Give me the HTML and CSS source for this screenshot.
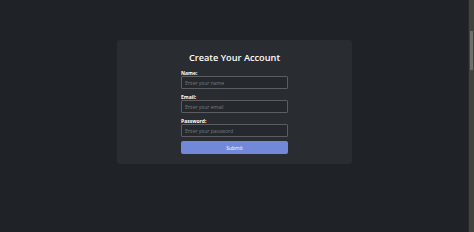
FILE: index.html
```html
<!DOCTYPE html>
<html lang="en">
<head>
  <meta charset="UTF-8" />
  <meta name="viewport" content="width=device-width, initial-scale=1.0" />
  <title>Create Your Account</title>
  <link rel="stylesheet" href="styles.css">
</head>
<body>
  <!-- signup card -->
  <div class="signup-card">
    <h1>Create Your Account</h1>
    <form class="signup-form" onsubmit="return false">
      <label for="name">Name:</label>
      <input type="text" id="name" placeholder="Enter your name" />

      <label for="email">Email:</label>
      <input type="email" id="email" placeholder="Enter your email" />

      <label for="password">Password:</label>
      <input type="password" id="password" placeholder="Enter your password" />

      <button type="submit">Submit</button>
    </form>
  </div>

  <!-- fake scrollbar -->
  <div class="scrollbar">
    <div class="scroll-arrow"></div>
    <div class="scroll-thumb"></div>
  </div>
</body>
</html>
```

FILE: styles.css
```css
body {
  margin: 0;
  padding: 40px 5px 0 0;
  font-family: "Open Sans", "Noto Sans", sans-serif;
  background-color: #1f2226;
  color: #fff;
  height: 232px;
  box-sizing: border-box;
  overflow: hidden;
}

.signup-card {
  width: 235px;
  height: 124px;
  margin: 0 auto;
  background: #292c31;
  border-radius: 3px;
  box-sizing: border-box;
  padding-top: 11px;
  text-align: center;
}

.signup-card h1 {
  margin: 0 0 6px;
  font-size: 9.2px;
  font-weight: 600;
  line-height: 13px;
}

.signup-form {
  width: 107px;
  margin: 0 auto;
  display: flex;
  flex-direction: column;
  text-align: left;
}

.signup-form label {
  font-size: 5px;
  font-weight: bold;
  line-height: 6px;
}

.signup-form input {
  height: 13px;
  box-sizing: border-box;
  border: 1px solid #5a5d62;
  border-radius: 1px;
  background: #25282c;
  color: #ddd;
  font-family: inherit;
  font-size: 5px;
  padding: 0 3px;
  margin-bottom: 5px;
  outline: none;
}

.signup-form input::placeholder {
  color: #7a7d82;
}

.signup-form button {
  height: 13px;
  margin-top: -1px;
  border: none;
  border-radius: 2px;
  background-color: #7289da;
  color: #fff;
  font-family: inherit;
  font-size: 5px;
  cursor: pointer;
}

.scrollbar {
  position: fixed;
  top: 0;
  right: 0;
  width: 5px;
  height: 100%;
  background: #424242;
  border-left: 1px solid #2a2a2a;
}

.scroll-arrow {
  height: 8px;
}

.scroll-thumb {
  margin: 23px 1px 0;
  height: 39px;
  background: #707070;
}
```
